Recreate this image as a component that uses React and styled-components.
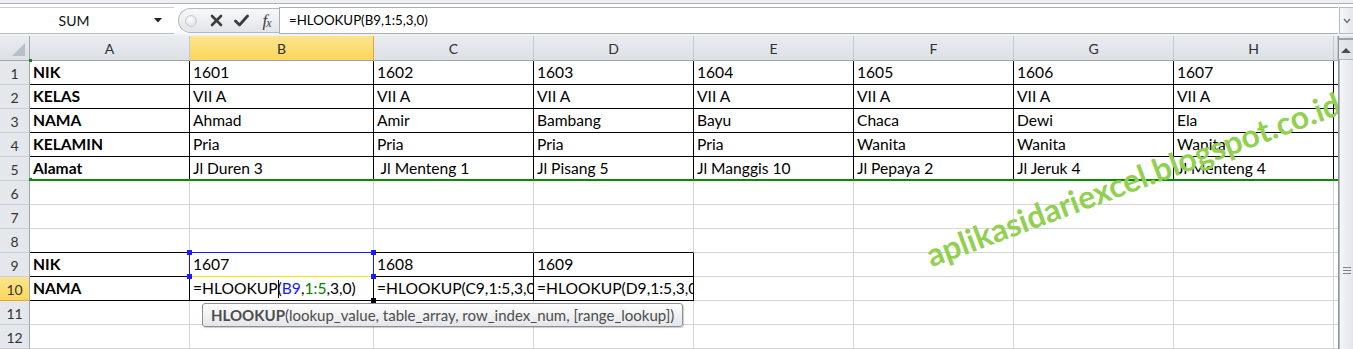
import React from "react";
import styled, { createGlobalStyle } from "styled-components";

const GRID = "#d4d4d4";
const HEAD_LINE = "#9ea6b0";

const GlobalStyle = createGlobalStyle`
  html, body { margin: 0; padding: 0; background: #fff; }
  body { font-family: Lato, "Liberation Sans", sans-serif; }
`;

const COLS = ["A", "B", "C", "D", "E", "F", "G", "H", "I"];

const DATA = {
  1: ["NIK", "1601", "1602", "1603", "1604", "1605", "1606", "1607"],
  2: ["KELAS", "VII A", "VII A", "VII A", "VII A", "VII A", "VII A", "VII A"],
  3: ["NAMA", "Ahmad", "Amir", "Bambang", "Bayu", "Chaca", "Dewi", "Ela"],
  4: ["KELAMIN", "Pria", "Pria", "Pria", "Pria", "Wanita", "Wanita", "Wanita"],
  5: ["Alamat", "Jl Duren 3", " Jl Menteng 1", "Jl Pisang 5", "Jl Manggis 10", "Jl Pepaya 2", "Jl Jeruk 4", "Jl Menteng 4"],
  9: ["NIK", "1607", "1608", "1609"],
  10: ["NAMA", "edit", "=HLOOKUP(C9,1:5,3,0)", "=HLOOKUP(D9,1:5,3,0)"],
};

const isBoxed = (r, c) => r <= 5 || ((r === 9 || r === 10) && c <= 3);

const Window = styled.div`
  width: 1353px;
  height: 349px;
  overflow: hidden;
  background: #fff;
`;

const RibbonEdge = styled.div`
  height: 3px;
  background: #eef0f3;
  border-bottom: 1px solid #a9b0ba;
`;

const FormulaBar = styled.div`
  display: flex;
  align-items: stretch;
  height: 32px;
  box-sizing: border-box;
  padding: 3px 0 2px;
  background: linear-gradient(#ffffff 85%, #eceef1);
`;

const NameBox = styled.div`
  display: flex;
  align-items: center;
  width: 174px;
  box-sizing: border-box;
  border-top: 1px solid #c9cdd3;
  border-bottom: 1px solid #b9bec5;
  background: #fff;
`;

const NameText = styled.div`
  flex: 1;
  text-align: center;
  font-size: 14px;
  color: #111;
  padding-left: 2px;
`;

const DropCaret = styled.div`
  width: 24px;
  display: flex;
  justify-content: center;
  padding-right: 4px;
`;

const Pill = styled.div`
  display: flex;
  align-items: center;
  align-self: center;
  height: 25px;
  width: 101px;
  margin-left: 4px;
  box-sizing: border-box;
  padding-left: 6px;
  border: 1px solid #b3b8bf;
  border-right: none;
  border-radius: 13px 0 0 13px;
  background: linear-gradient(#f7f8f9, #e2e5e9);
`;

const Knob = styled.div`
  width: 10px;
  height: 10px;
  border-radius: 50%;
  border: 1px solid #c7cbd0;
  background: radial-gradient(circle at 40% 35%, #ffffff, #d3d6da);
  margin-right: 7px;
`;

const IconSlot = styled.div`
  width: 25px;
  display: flex;
  justify-content: center;
  align-items: center;
  color: #3d3d3d;
`;

const Fx = styled.span`
  font-family: "Liberation Serif", "DejaVu Serif", serif;
  font-style: italic;
  font-size: 17px;
  color: #3d3d3d;
  letter-spacing: -1px;
  sub {
    font-size: 12px;
    vertical-align: -1px;
  }
`;

const FormulaInput = styled.div`
  flex: 1;
  box-sizing: border-box;
  border: 1px solid #a9aeb5;
  border-right: none;
  background: #fff;
  padding-left: 9px;
  font-size: 13.3px;
  line-height: 25px;
  color: #000;
  white-space: pre;
`;

const ExpandButton = styled.div`
  width: 14px;
  margin-left: 1px;
  box-sizing: border-box;
  border: 1px solid #b5bac1;
  border-right: none;
  background: linear-gradient(90deg, #f6f7f9, #e4e7eb);
  display: flex;
  justify-content: center;
  align-items: center;
`;

const SheetArea = styled.div`
  display: flex;
  height: 313px;
`;

const Sheet = styled.div`
  position: relative;
  width: 1338px;
  overflow: hidden;
  display: grid;
  grid-template-columns: 30px 160px 184px repeat(6, 160px) 4px;
  grid-template-rows: 25px repeat(12, 24px);
`;

const ColHead = styled.div`
  box-sizing: border-box;
  border-right: 1px solid ${(p) => (p.$sel ? "#e2a73c" : "#c4c9d0")};
  border-bottom: 1px solid ${HEAD_LINE};
  background: ${(p) =>
    p.$sel
      ? "linear-gradient(#fde58f, #fbd65b)"
      : "linear-gradient(#e9ecf0, #dde1e6)"};
  text-align: center;
  font-size: 14px;
  line-height: 24px;
  padding-top: 1px;
  color: #2f2f2f;
`;

const Corner = styled(ColHead)`
  position: relative;
  border-right: 1px solid ${HEAD_LINE};
  svg {
    position: absolute;
    right: 4px;
    bottom: 4px;
  }
`;

const RowHead = styled.div`
  box-sizing: border-box;
  border-right: 1px solid ${HEAD_LINE};
  border-bottom: 1px solid ${(p) => (p.$sel ? "#e2a73c" : "#c9ced5")};
  background: ${(p) =>
    p.$sel ? "linear-gradient(#fde58f, #fbd65b)" : "#e4e8ec"};
  text-align: center;
  font-size: 14px;
  line-height: 23px;
  padding-top: 1px;
  color: #333;
`;

const Cell = styled.div`
  box-sizing: border-box;
  border-right: 1px solid ${(p) => p.$right};
  border-bottom: 1px solid ${(p) => p.$bottom};
  padding: 0 3px;
  font-size: 15.6px;
  line-height: 23px;
  font-weight: ${(p) => (p.$bold ? 700 : 400)};
  color: #000;
  white-space: pre;
  overflow: hidden;
`;

const Ref = styled.span`
  color: ${(p) => p.$color};
`;

const TextCaret = styled.span`
  display: inline-block;
  width: 1px;
  height: 18px;
  background: #000;
  vertical-align: -4px;
  margin-right: -1px;
`;

const RangeLine = styled.div`
  position: absolute;
  left: 30px;
  top: 143px;
  width: 1308px;
  height: 1px;
  background: #0a8a0a;
  box-shadow: 0 1px 0 #0a8a0a;
`;

const Handle = styled.div`
  position: absolute;
  left: ${(p) => p.$x}px;
  top: ${(p) => p.$y}px;
  width: ${(p) => p.$size}px;
  height: ${(p) => p.$size}px;
  background: ${(p) => p.$color};
`;

const RefBox = styled.div`
  position: absolute;
  left: 189px;
  top: 216px;
  width: 185px;
  height: 25px;
  box-sizing: border-box;
  border: 1px solid #1a1aff;
  border-bottom: 1px solid #f3e600;
`;

const Tooltip = styled.div`
  position: absolute;
  left: 202px;
  top: 267px;
  width: 481px;
  height: 24px;
  box-sizing: border-box;
  border: 1px solid #8d9196;
  border-radius: 3px;
  background: linear-gradient(#ffffff, #e3e5e9);
  box-shadow: 1px 1px 1px rgba(0, 0, 0, 0.2);
  padding-left: 8px;
  font-size: 15px;
  line-height: 22px;
  color: #4d4d4d;
  white-space: nowrap;
  b {
    font-weight: 700;
  }
`;

const Watermark = styled.span`
  position: absolute;
  left: 933px;
  top: 203px;
  font-size: 32px;
  line-height: 32px;
  font-weight: 700;
  color: #92d050;
  white-space: nowrap;
  transform: rotate(-20.5deg);
  transform-origin: 0 100%;
  pointer-events: none;
`;

const VScroll = styled.div`
  width: 15px;
  box-sizing: border-box;
  border-left: 1px solid #8c949e;
  background: linear-gradient(90deg, #e6e9ee, #dde1e7);
  display: flex;
  flex-direction: column;
  align-items: center;
  overflow: hidden;
`;

const SplitBox = styled.div`
  width: 12px;
  height: 7px;
  margin-top: 2px;
  border: 1px solid #9aa2ac;
  background: #fbfbfc;
`;

const ArrowUp = styled.div`
  margin-top: 8px;
  width: 0;
  height: 0;
  border-left: 5px solid transparent;
  border-right: 5px solid transparent;
  border-bottom: 5px solid #4a4f55;
`;

const Thumb = styled.div`
  margin-top: 6px;
  width: 14px;
  height: 422px;
  flex-shrink: 0;
  box-sizing: border-box;
  border: 1px solid #b2b9c2;
  border-right: none;
  background: linear-gradient(90deg, #f4f5f7, #e2e6eb);
  display: flex;
  justify-content: center;
  align-items: center;
`;

const Grip = styled.div`
  width: 8px;
  height: 5px;
  border-top: 1px solid #7d848c;
  border-bottom: 1px solid #7d848c;
  position: relative;
  &::after {
    content: "";
    position: absolute;
    left: 0;
    right: 0;
    top: 2px;
    height: 1px;
    background: #7d848c;
  }
`;

const EditCell = () => (
  <>
    =HLOOKUP
    <TextCaret />(<Ref $color="#1a1aff">B9</Ref>,<Ref $color="#008000">1:5</Ref>,3,0)
  </>
);

function renderRow(r) {
  const values = DATA[r] || [];
  const cells = COLS.map((col, c) => {
    const boxed = isBoxed(r, c);
    const right = boxed ? "#000" : GRID;
    const bottom = boxed || (r === 8 && c <= 3) ? "#000" : GRID;
    const v = values[c];
    return (
      <Cell key={col + r} $right={right} $bottom={bottom} $bold={c === 0}>
        {v === "edit" ? <EditCell /> : v || ""}
      </Cell>
    );
  });
  return [
    <RowHead key={"h" + r} $sel={r === 10}>
      {r}
    </RowHead>,
    ...cells,
  ];
}

export default function App() {
  const rows = Array.from({ length: 12 }, (_, i) => i + 1);
  return (
    <Window>
      <GlobalStyle />
      <RibbonEdge />
      <FormulaBar>
        <NameBox>
          <NameText>SUM</NameText>
          <DropCaret>
            <svg width="8" height="5" viewBox="0 0 8 5">
              <path d="M0 0H8L4 4.5Z" fill="#222" />
            </svg>
          </DropCaret>
        </NameBox>
        <Pill>
          <Knob />
          <IconSlot>
            <svg width="13" height="13" viewBox="0 0 13 13">
              <path d="M2 2L11 11M11 2L2 11" stroke="#3d3d3d" strokeWidth="2.6" strokeLinecap="round" />
            </svg>
          </IconSlot>
          <IconSlot>
            <svg width="15" height="13" viewBox="0 0 15 13">
              <path d="M1.5 7L5.5 11L13.5 2" stroke="#3d3d3d" strokeWidth="2.8" fill="none" strokeLinecap="round" strokeLinejoin="round" />
            </svg>
          </IconSlot>
          <IconSlot>
            <Fx>
              f<sub>x</sub>
            </Fx>
          </IconSlot>
        </Pill>
        <FormulaInput>=HLOOKUP(B9,1:5,3,0)</FormulaInput>
        <ExpandButton>
          <svg width="8" height="6" viewBox="0 0 8 6">
            <path d="M1 1L4 4.5L7 1" stroke="#6b7077" strokeWidth="1.4" fill="none" />
          </svg>
        </ExpandButton>
      </FormulaBar>
      <SheetArea>
        <Sheet>
          <Corner>
            <svg width="13" height="13" viewBox="0 0 13 13">
              <path d="M13 0V13H0Z" fill="#b9bfc7" />
            </svg>
          </Corner>
          {COLS.map((col) => (
            <ColHead key={col} $sel={col === "B"}>
              {col === "I" ? "" : col}
            </ColHead>
          ))}
          {rows.map((r) => renderRow(r))}

          <RangeLine />
          <Handle $x={29} $y={23} $size={3} $color="#0a8a0a" />
          <Handle $x={29} $y={142} $size={3} $color="#0a8a0a" />
          <RefBox />
          <Handle $x={187} $y={214} $size={5} $color="#1a1aff" />
          <Handle $x={371} $y={214} $size={5} $color="#1a1aff" />
          <Handle $x={187} $y={238} $size={5} $color="#1a1aff" />
          <Handle $x={371} $y={238} $size={5} $color="#1a1aff" />
          <Handle $x={371} $y={262} $size={5} $color="#000" />
          <Watermark>aplikasidariexcel.blogspot.co.id</Watermark>
          <Tooltip>
            <b>HLOOKUP</b>(lookup_value, table_array, row_index_num, [range_lookup])
          </Tooltip>
        </Sheet>
        <VScroll>
          <SplitBox />
          <ArrowUp />
          <Thumb>
            <Grip />
          </Thumb>
        </VScroll>
      </SheetArea>
    </Window>
  );
}
